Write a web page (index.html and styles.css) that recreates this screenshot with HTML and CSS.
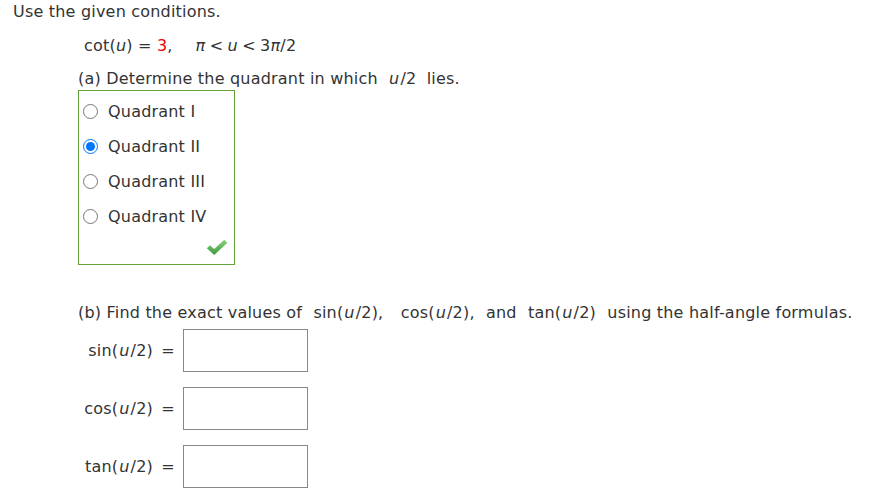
FILE: index.html
```html
<!DOCTYPE html>
<html lang="en">
<head>
    <meta charset="UTF-8">
    <title>Half-angle formulas</title>
    <link rel="stylesheet" href="styles.css">
</head>
<body>
    <div class="question">
        <p class="intro">Use the given conditions.</p>
        <p class="given">cot(<i>u</i>) = <span class="red">3</span>,<span class="gap"></span><span class="tight"><i>π</i> &lt; <i>u</i> &lt; 3<i>π</i>/2</span></p>

        <p class="part part-a">(a) Determine the quadrant in which <span class="m"><i>u</i>/2</span> lies.</p>
        <div class="choices">
            <label class="choice"><input type="radio" name="quad"> Quadrant I</label>
            <label class="choice"><input type="radio" name="quad" checked> Quadrant II</label>
            <label class="choice"><input type="radio" name="quad"> Quadrant III</label>
            <label class="choice"><input type="radio" name="quad"> Quadrant IV</label>
            <div class="mark">
                <svg width="22" height="17" viewBox="0 0 22 17">
                    <defs>
                        <linearGradient id="g" x1="0" y1="0" x2="0" y2="1">
                            <stop offset="0" stop-color="#86d37a"/>
                            <stop offset="1" stop-color="#3f983f"/>
                        </linearGradient>
                    </defs>
                    <path d="M0.8 9.2 L4 6.2 L8.2 10 L18.3 0.8 L21.4 3.8 L8.2 16 Z" fill="url(#g)"/>
                </svg>
            </div>
        </div>

        <p class="part part-b">(b) Find the exact values of <span class="m">sin(<i>u</i>/2),</span> <span class="m">cos(<i>u</i>/2),</span> and <span class="m">tan(<i>u</i>/2)</span> using the half-angle formulas.</p>
        <div class="answers">
            <div class="row"><span class="lhs">sin(<i>u</i>/2)</span><span class="eq">=</span><input type="text" class="box"></div>
            <div class="row"><span class="lhs">cos(<i>u</i>/2)</span><span class="eq">=</span><input type="text" class="box"></div>
            <div class="row"><span class="lhs">tan(<i>u</i>/2)</span><span class="eq">=</span><input type="text" class="box"></div>
        </div>
    </div>
</body>
</html>
```

FILE: styles.css
```css
body {
    font-family: "DejaVu Sans", Verdana, sans-serif;
    font-size: 16px;
    letter-spacing: 0.2px;
    color: #333;
    background-color: #fff;
    margin: 0;
    padding: 0;
}

.question {
    padding: 2px 0 0 13px;
}

p {
    margin: 0;
}

.m i,
.lhs i {
    margin: 0 1px;
}

.m {
    margin: 0 5px;
}

.part-b .m {
    margin: 0 6px;
}

.intro {
    line-height: 20px;
}

.given {
    margin: 14px 0 0 71px;
    line-height: 20px;
}

.gap {
    display: inline-block;
    width: 23px;
}

.tight {
    word-spacing: -1px;
}

.red {
    color: #e00;
}

.part {
    margin-left: 65px;
    line-height: 20px;
}

.part-a {
    margin-top: 13px;
}

.choices {
    margin: 1px 0 0 65px;
    width: 155px;
    height: 173px;
    border: 1px solid #62a43b;
    display: flex;
    flex-direction: column;
    position: relative;
}

.choice {
    display: flex;
    align-items: center;
    height: 35px;
    padding-left: 3px;
}

.choice:first-child {
    margin-top: 3px;
}

.choice input {
    width: 15px;
    height: 15px;
    margin: 0 10px 0 1px;
    accent-color: #0075ff;
}

.mark {
    position: absolute;
    right: 6px;
    bottom: 8px;
    line-height: 0;
}

.part-b {
    margin-top: 38px;
}

.answers {
    margin: 6px 0 0 71px;
}

.row {
    display: flex;
    align-items: center;
    margin-bottom: 15px;
}

.lhs {
    width: 69px;
    text-align: right;
}

.eq {
    width: 30px;
    text-align: center;
}

.box {
    width: 125px;
    height: 43px;
    box-sizing: border-box;
    border: 1px solid #888;
    margin: 0;
    padding: 0 4px;
}
```
